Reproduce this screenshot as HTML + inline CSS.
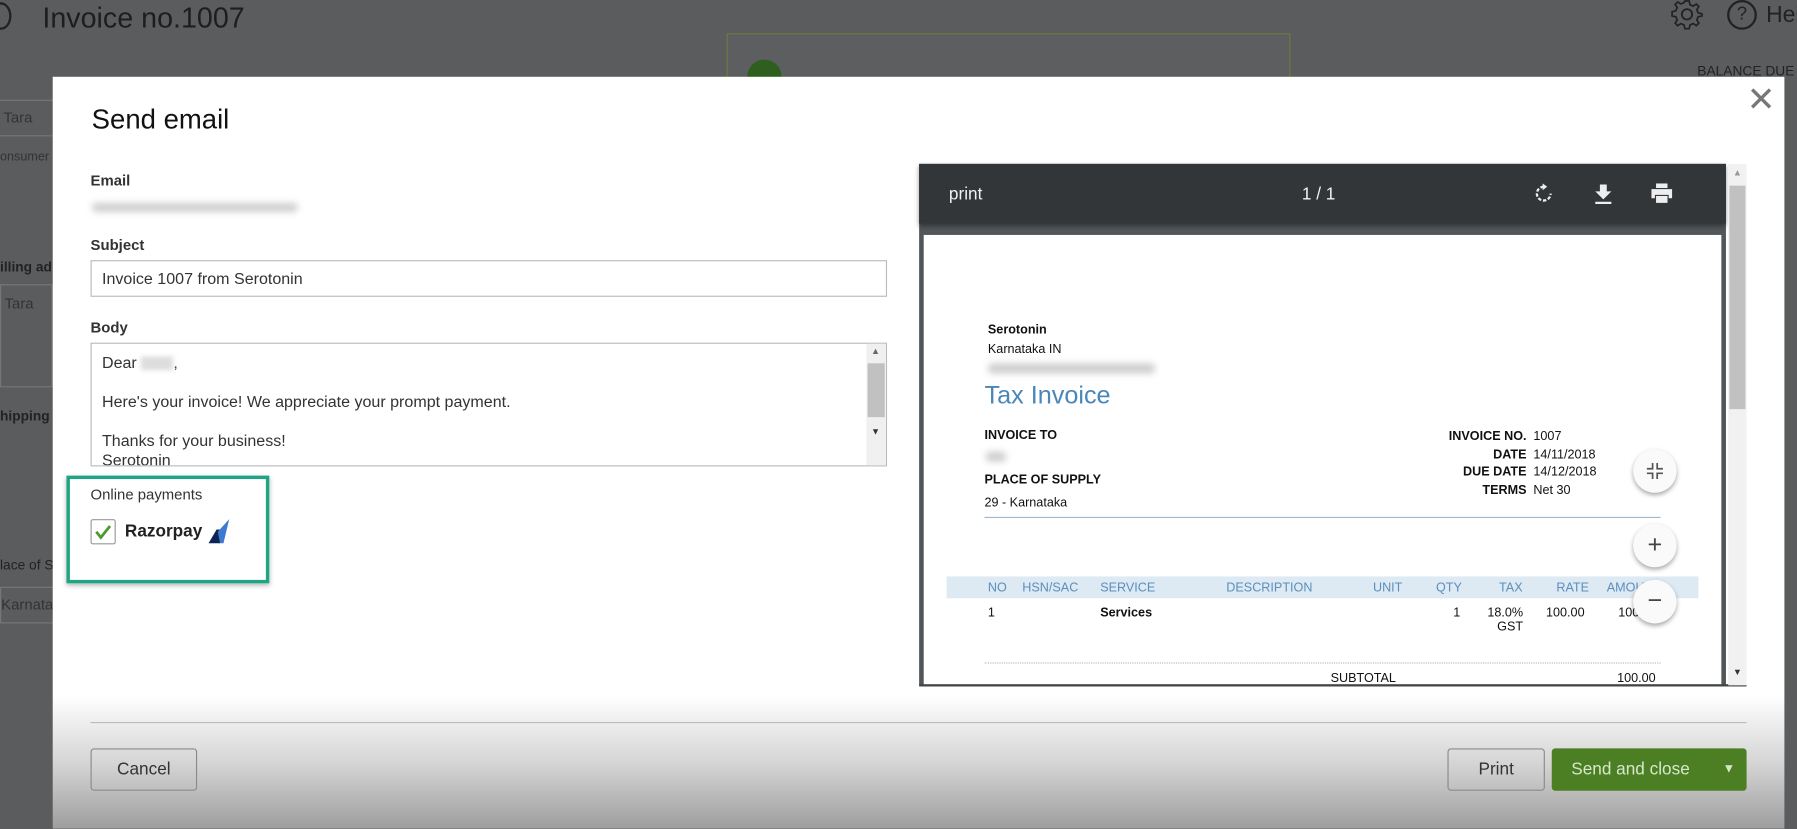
<!DOCTYPE html>
<html><head><meta charset="utf-8"><style>
html,body{margin:0;padding:0;width:1797px;height:829px;overflow:hidden;background:#5b5c5e;font-family:"Liberation Sans",sans-serif}
#w{position:absolute;left:0;top:0;width:1568px;height:723px;transform:scale(1.14605);transform-origin:0 0}
.a{position:absolute}
.lbl{font-size:13px;color:#333;font-weight:bold}
.blur{filter:blur(3px);background:#cfcfcf;height:8px;border-radius:4px}
.pv{font-size:11px;color:#111}
.b{font-weight:bold}
.fab{position:absolute;width:38px;height:38px;border-radius:50%;background:#fafafa;box-shadow:0 2px 4px rgba(0,0,0,.35);color:#444;font-size:22px;text-align:center;line-height:36px}
</style></head><body><div id="w">
<!-- background page -->
<div class="a" style="left:37px;top:2px;font-size:25px;color:#1e1e1e">Invoice no.1007</div>
<div class="a" style="left:-8px;top:2px;width:14px;height:20px;border:2px solid #222;border-radius:50%"></div>
<div class="a" style="left:634px;top:29px;width:490px;height:40px;border:1px solid #6d7a3f;background:#5d5e5f"></div>
<div class="a" style="left:652px;top:52px;width:30px;height:30px;border-radius:50%;background:#2f5f1e"></div>
<svg class="a" style="left:1458px;top:-1px" width="28" height="28" viewBox="0 0 28 28"><path d="M12 2 H16 L16.8 5.5 L19.8 6.8 L22.8 4.9 L25.1 7.2 L23.2 10.2 L24.5 13.2 L28 14 V16 L24.5 16.8 L23.2 19.8 L25.1 22.8 L22.8 25.1 L19.8 23.2 L16.8 24.5 L16 28 H12 L11.2 24.5 L8.2 23.2 L5.2 25.1 L2.9 22.8 L4.8 19.8 L3.5 16.8 L0 16 V12 L3.5 11.2 L4.8 8.2 L2.9 5.2 L5.2 2.9 L8.2 4.8 L11.2 3.5Z" transform="translate(1 0) scale(0.93)" fill="none" stroke="#222" stroke-width="1.6"/><circle cx="14" cy="13.5" r="4.5" fill="none" stroke="#222" stroke-width="1.6"/></svg>
<div class="a" style="left:1507px;top:0;width:22px;height:22px;border:2px solid #222;border-radius:50%;font-size:16px;text-align:center;color:#222;line-height:22px">?</div>
<div class="a" style="left:1541px;top:2px;font-size:20px;color:#222">Hel</div>
<div class="a" style="left:1481px;top:55px;font-size:12px;color:#222">BALANCE DUE</div>
<div class="a" style="left:0;top:87px;width:46px;height:30px;border-top:1px solid #777;border-bottom:1px solid #777;font-size:13px;color:#333;line-height:30px;padding-left:3px">Tara</div>
<div class="a" style="left:0;top:131px;font-size:11px;color:#333">onsumer</div>
<div class="a" style="left:0;top:226px;font-size:12px;color:#222;font-weight:bold">illing ad</div>
<div class="a" style="left:0;top:248px;width:46px;height:90px;border:1px solid #777;font-size:13px;color:#333;padding:8px 3px;box-sizing:border-box">Tara</div>
<div class="a" style="left:0;top:356px;font-size:12px;color:#222;font-weight:bold">hipping</div>
<div class="a" style="left:0;top:486px;font-size:12px;color:#222">lace of S</div>
<div class="a" style="left:0;top:512px;width:46px;height:30px;border:1px solid #777;font-size:13px;color:#333;line-height:30px">Karnata</div>
<!-- modal -->
<div class="a" style="left:46px;top:67px;width:1511px;height:656px;background:linear-gradient(to bottom,#fff 0,#fff 540px,#d4d4d4 600px,#9e9e9e 656px)"></div>
<div class="a" style="left:1524px;top:70px;font-size:30px;color:#777;font-weight:300">✕</div>
<div class="a" style="left:80px;top:91px;font-size:24px;color:#111">Send email</div>
<div class="a lbl" style="left:79px;top:150px">Email</div>
<div class="a blur" style="left:80px;top:177px;width:180px"></div>
<div class="a lbl" style="left:79px;top:206px">Subject</div>
<div class="a" style="left:79px;top:227px;width:695px;height:32px;border:1px solid #bbb;box-sizing:border-box;font-size:14px;color:#333;line-height:30px;padding-left:9px">Invoice 1007 from Serotonin</div>
<div class="a lbl" style="left:79px;top:278px">Body</div>
<div class="a" style="left:79px;top:299px;width:695px;height:108px;border:1px solid #bbb;box-sizing:border-box;font-size:14px;color:#333;line-height:17px;padding:8px 9px;overflow:hidden">Dear <span style="display:inline-block;width:28px;height:12px;background:#ddd;filter:blur(2px);vertical-align:middle"></span>,<br><br>Here's your invoice! We appreciate your prompt payment.<br><br>Thanks for your business!<br>Serotonin</div>
<div class="a" style="left:756px;top:300px;width:17px;height:106px;background:#f0f0f0"></div>
<div class="a" style="left:757px;top:317px;width:15px;height:47px;background:#c1c1c1"></div>
<div class="a" style="left:760px;top:302px;font-size:8px;color:#666">▲</div>
<div class="a" style="left:760px;top:372px;font-size:8px;color:#333">▼</div>
<!-- online payments -->
<div class="a" style="left:58px;top:415px;width:177px;height:94px;border:3px solid #1fa583;box-sizing:border-box;box-shadow:0 2px 4px rgba(0,0,0,.3)"></div>
<div class="a lbl" style="left:79px;top:424px;font-weight:normal;color:#333">Online payments</div>
<div class="a" style="left:79px;top:453px;width:22px;height:22px;border:1px solid #999;box-sizing:border-box;border-radius:2px"></div>
<svg class="a" style="left:82px;top:456px" width="16" height="16"><path d="M2 8 L6 13 L14 3" stroke="#4c9a2a" stroke-width="2.4" fill="none"/></svg>
<div class="a" style="left:109px;top:455px;font-size:15px;color:#222;font-weight:bold">Razorpay</div>
<svg class="a" style="left:180px;top:452px" width="22" height="24"><path d="M2 22 L9 10 L14 10 L12 22Z" fill="#0c2451"/><path d="M10 12 L20 1 L15 22 L12 22Z" fill="#3f7ad2"/></svg>
<!-- preview -->
<div class="a" style="left:802px;top:143px;width:704px;height:455px;background:#525659"></div>
<div class="a" style="left:802px;top:143px;width:704px;height:52px;background:#323639;box-shadow:0 2px 4px rgba(0,0,0,.4)"></div>
<div class="a" style="left:828px;top:161px;font-size:15px;color:#f1f1f1">print</div>
<div class="a" style="left:1136px;top:161px;font-size:15px;color:#f1f1f1">1 / 1</div>
<svg class="a" style="left:1338px;top:160px" width="18" height="18"><path d="M9 3 A6 6 0 1 0 15 9" stroke="#eee" stroke-width="2" fill="none" stroke-dasharray="3 1.5"/><path d="M8 0 L12 3 L8 6Z" fill="#eee"/></svg>
<svg class="a" style="left:1390px;top:160px" width="18" height="18"><path d="M6 1 H12 V7 H16 L9 14 L2 7 H6Z M2 16 H16 V18 H2Z" fill="#eee"/></svg>
<svg class="a" style="left:1440px;top:160px" width="20" height="18"><path d="M5 0 H15 V4 H5Z M1 5 H19 V13 H16 V10 H4 V13 H1Z M5 11 H15 V17 H5Z" fill="#eee"/></svg>
<div class="a" style="left:806px;top:205px;width:696px;height:393px;background:#fff;overflow:hidden">
 <div class="a pv b" style="left:56px;top:77px">Serotonin</div>
 <div class="a pv" style="left:56px;top:94px">Karnataka IN</div>
 <div class="a blur" style="left:56px;top:112px;width:146px;height:9px"></div>
 <div class="a" style="left:53px;top:127px;font-size:22px;color:#4a87b8">Tax Invoice</div>
 <div class="a pv b" style="left:53px;top:169px">INVOICE TO</div>
 <div class="a blur" style="left:54px;top:189px;width:18px;height:9px"></div>
 <div class="a pv b" style="left:53px;top:208px">PLACE OF SUPPLY</div>
 <div class="a pv" style="left:53px;top:228px">29 - Karnataka</div>
 <div class="a pv b" style="left:380px;top:169px;width:146px;text-align:right;line-height:15.5px">INVOICE NO.<br>DATE<br>DUE DATE<br>TERMS</div>
 <div class="a pv" style="left:532px;top:169px;line-height:15.5px">1007<br>14/11/2018<br>14/12/2018<br>Net 30</div>
 <div class="a" style="left:53px;top:246px;width:590px;height:1px;background:#9fb8cf"></div>
 <div class="a" style="left:20px;top:298px;width:656px;height:19px;background:#dde9f3"></div>
 <div class="a pv" style="top:302px;left:56px;color:#5b8fbd">NO</div>
 <div class="a pv" style="top:302px;left:86px;color:#5b8fbd">HSN/SAC</div>
 <div class="a pv" style="top:302px;left:154px;color:#5b8fbd">SERVICE</div>
 <div class="a pv" style="top:302px;left:264px;color:#5b8fbd">DESCRIPTION</div>
 <div class="a pv" style="top:302px;left:392px;color:#5b8fbd">UNIT</div>
 <div class="a pv" style="top:302px;left:447px;color:#5b8fbd">QTY</div>
 <div class="a pv" style="top:302px;left:502px;color:#5b8fbd">TAX</div>
 <div class="a pv" style="top:302px;left:552px;color:#5b8fbd">RATE</div>
 <div class="a pv" style="top:302px;left:596px;color:#5b8fbd">AMOUNT</div>
 <div class="a pv" style="top:324px;left:56px">1</div>
 <div class="a pv b" style="top:324px;left:154px">Services</div>
 <div class="a pv" style="top:324px;left:462px">1</div>
 <div class="a pv" style="top:324px;left:490px;width:33px;text-align:right">18.0%<br>GST</div>
 <div class="a pv" style="top:324px;left:543px">100.00</div>
 <div class="a pv" style="top:324px;left:606px">100.00</div>
 <div class="a" style="left:53px;top:373px;width:590px;border-top:1px dotted #bbb"></div>
 <div class="a pv" style="top:381px;left:355px">SUBTOTAL</div>
 <div class="a pv" style="top:381px;left:605px">100.00</div>
</div>
<div class="a" style="left:802px;top:597px;width:722px;height:2px;background:#444"></div>
<div class="fab" style="left:1425px;top:392px"><svg width="16" height="16" style="margin-top:11px"><path d="M6 1 V6 H1 M10 1 V6 H15 M6 15 V10 H1 M10 15 V10 H15" stroke="#555" stroke-width="1.5" fill="none"/></svg></div>
<div class="fab" style="left:1425px;top:457px">+</div>
<div class="fab" style="left:1425px;top:506px">−</div>
<div class="a" style="left:1508px;top:143px;width:16px;height:455px;background:#f1f1f1"></div>
<div class="a" style="left:1509px;top:162px;width:14px;height:195px;background:#c1c1c1"></div>
<div class="a" style="left:1512px;top:146px;font-size:8px;color:#999">▲</div>
<div class="a" style="left:1512px;top:582px;font-size:8px;color:#333">▼</div>
<!-- footer -->
<div class="a" style="left:79px;top:630px;width:1445px;height:1px;background:#bbb"></div>
<div class="a" style="left:79px;top:653px;width:93px;height:37px;border:1px solid #8a8a8a;border-radius:3px;box-sizing:border-box;font-size:15px;color:#333;text-align:center;line-height:35px">Cancel</div>
<div class="a" style="left:1263px;top:653px;width:85px;height:37px;border:1px solid #8a8a8a;border-radius:3px;box-sizing:border-box;font-size:15px;color:#333;text-align:center;line-height:35px">Print</div>
<div class="a" style="left:1354px;top:653px;width:170px;height:37px;background:#4c7f24;border-radius:3px;font-size:15px;color:#d6e8c9;line-height:37px"><span style="margin-left:17px">Send and close</span><span style="position:absolute;right:10px;font-size:11px">▼</span></div>
</div></body></html>
